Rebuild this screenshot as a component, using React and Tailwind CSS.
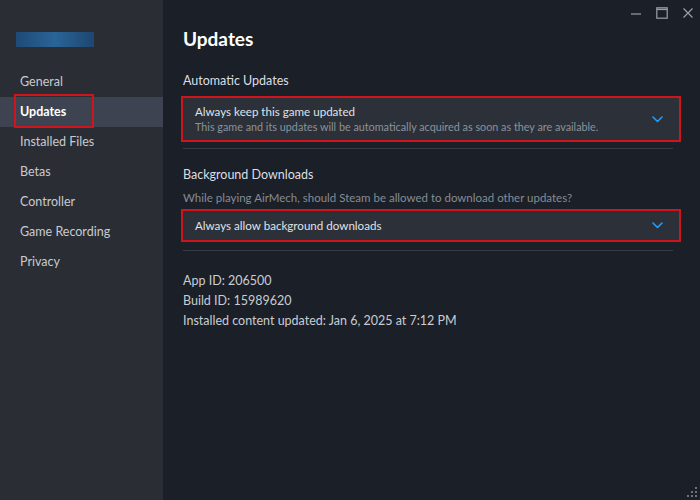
import React from 'react';

const navItems = ['General', 'Updates', 'Installed Files', 'Betas', 'Controller', 'Game Recording', 'Privacy'];

function Chevron() {
  return (
    <svg width="11" height="7" viewBox="0 0 11 7" fill="none">
      <path d="M1 1l4.5 4.5L10 1" stroke="#1a9fff" strokeWidth="1.6" strokeLinecap="round" strokeLinejoin="round" />
    </svg>
  );
}

function Dropdown({ title, subtitle }) {
  return (
    <div className={`-ml-[2px] border-2 border-[#d0141c] bg-[#2c3039] flex items-center justify-between pl-[12px] pr-[16px] ${subtitle ? 'h-[46px]' : 'h-[33px]'}`}>
      <div className="flex flex-col">
        <span className="text-[11.6px] leading-[15px] text-[#dfe3e8]">{title}</span>
        {subtitle && <span className="text-[10.8px] leading-[15px] text-[#8b929a]">{subtitle}</span>}
      </div>
      <Chevron />
    </div>
  );
}

export default function App() {
  return (
    <div className="w-[700px] h-[500px] flex bg-[#1b1f27] overflow-hidden" style={{ fontFamily: 'Lato, "Noto Sans", sans-serif' }}>
      {/* Sidebar */}
      <div className="w-[163px] shrink-0 bg-[#2a2d34] flex flex-col pt-[32px]">
        <div className="ml-[16px] w-[78px] h-[15px] bg-gradient-to-r from-[#1d4e7f] via-[#2b6aa3] to-[#1d4a78] opacity-90 blur-[0.5px]" />
        <div className="mt-[20px] flex flex-col">
          {navItems.map((item) => (
            <div key={item} className={`relative h-[30px] flex items-center pl-[20px] text-[12.5px] ${item === 'Updates' ? 'bg-[#3d4350] text-white font-bold' : 'text-[#c7cbd1]'}`}>
              {item}
              {item === 'Updates' && (
                <div className="absolute left-[14px] top-[-3px] w-[80px] h-[34px] border-2 border-[#d0141c]" />
              )}
            </div>
          ))}
        </div>
      </div>

      {/* Main */}
      <div className="flex-1 relative pl-[20px] pr-[19px]">
        <div className="absolute top-[7px] right-[6px] flex items-center gap-[14px] text-[#9aa0a8]">
          <svg width="12" height="12" viewBox="0 0 12 12"><path d="M1 7h10" stroke="currentColor" strokeWidth="1.2" /></svg>
          <svg width="12" height="12" viewBox="0 0 12 12" fill="none"><rect x="0.8" y="0.8" width="10.4" height="10.4" stroke="currentColor" strokeWidth="1.2" /><path d="M0.8 2.4h10.4" stroke="currentColor" strokeWidth="1.4" /></svg>
          <svg width="12" height="12" viewBox="0 0 12 12"><path d="M1.5 1.5l9 9M10.5 1.5l-9 9" stroke="currentColor" strokeWidth="1.2" /></svg>
        </div>

        <h1 className="mt-[25px] text-[19px] leading-[28px] font-bold text-white">Updates</h1>

        <div className="mt-[19px] text-[12.5px] leading-[18px] text-[#dcdee2]">Automatic Updates</div>
        <div className="mt-[6px]">
          <Dropdown title="Always keep this game updated" subtitle="This game and its updates will be automatically acquired as soon as they are available." />
        </div>
        <div className="mt-[6px] mr-[8px] h-px bg-[#353a44]" />

        <div className="mt-[17px] text-[12.5px] leading-[18px] text-[#dcdee2]">Background Downloads</div>
        <div className="mt-[6px] text-[11.5px] leading-[16px] text-[#868c95]">While playing AirMech, should Steam be allowed to download other updates?</div>
        <div className="mt-[3px]">
          <Dropdown title="Always allow background downloads" />
        </div>
        <div className="mt-[8px] mr-[8px] h-px bg-[#353a44]" />

        <div className="mt-[21px] flex flex-col gap-[2px] text-[12.5px] leading-[18px] text-[#c9cdd3]">
          <span>App ID: 206500</span>
          <span>Build ID: 15989620</span>
          <span>Installed content updated: Jan 6, 2025 at 7:12 PM</span>
        </div>

        <div className="absolute bottom-[3px] right-[3px] grid grid-cols-3 gap-[2px]">
          <span />
          <span />
          <span className="w-[2px] h-[2px] bg-[#6b717a]" />
          <span />
          <span className="w-[2px] h-[2px] bg-[#6b717a]" />
          <span className="w-[2px] h-[2px] bg-[#6b717a]" />
          <span className="w-[2px] h-[2px] bg-[#6b717a]" />
          <span className="w-[2px] h-[2px] bg-[#6b717a]" />
          <span className="w-[2px] h-[2px] bg-[#6b717a]" />
        </div>
      </div>
    </div>
  );
}
